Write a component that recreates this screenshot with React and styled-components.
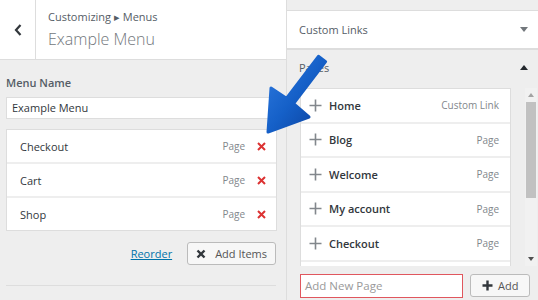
import React from "react";
import styled, { createGlobalStyle } from "styled-components";

const GlobalStyle = createGlobalStyle`
  body {
    margin: 0;
    background: #eeeeee;
    font-family: "Open Sans", "Noto Sans", sans-serif;
  }
`;

const Screen = styled.div`
  position: relative;
  display: flex;
  width: 538px;
  height: 300px;
  overflow: hidden;
  background: #eeeeee;
`;

const LeftPanel = styled.div`
  width: 286px;
  flex-shrink: 0;
  border-right: 1px solid #dddddd;
  display: flex;
  flex-direction: column;
`;

const Header = styled.div`
  height: 59px;
  background: #ffffff;
  border-bottom: 1px solid #dddddd;
  display: flex;
`;

const BackButton = styled.div`
  width: 35px;
  border-right: 1px solid #dddddd;
  display: flex;
  align-items: center;
  justify-content: center;
`;

const HeaderText = styled.div`
  padding: 9px 0 0 12px;
`;

const Crumbs = styled.div`
  font-size: 11px;
  color: #555d66;
  line-height: 16px;
`;

const Title = styled.div`
  margin-top: 3px;
  font-size: 16px;
  font-weight: 300;
  color: #72777c;
  line-height: 22px;
`;

const Body = styled.div`
  padding: 15px 10px 0 6px;
`;

const Label = styled.div`
  font-size: 11px;
  font-weight: 600;
  color: #555d66;
  line-height: 16px;
`;

const NameInput = styled.div`
  margin-top: 6px;
  height: 20px;
  background: #ffffff;
  border: 1px solid #dddddd;
  border-right: none;
  margin-right: -10px;
  padding-left: 5px;
  font-size: 11px;
  line-height: 20px;
  color: #32373c;
`;

const ItemList = styled.div`
  margin-top: 10px;
  width: 269px;
  background: #ffffff;
  border: 1px solid #dddddd;
`;

const MenuRow = styled.div`
  height: 32px;
  display: flex;
  align-items: center;
  padding: 0 10px 0 13px;
  border-top: ${(p) => (p.first ? "none" : "2px solid #eeeeee")};
  font-size: 11px;
`;

const RowTitle = styled.span`
  flex: 1;
  color: #32373c;
  font-weight: 500;
`;

const RowType = styled.span`
  color: #82878c;
  font-size: 10px;
  margin-right: ${(p) => p.gap || 0}px;
`;

const Actions = styled.div`
  margin-top: 11px;
  width: 270px;
  display: flex;
  justify-content: flex-end;
  align-items: center;
  gap: 15px;
`;

const Reorder = styled.a`
  font-size: 11px;
  color: #0073aa;
  text-decoration: underline;
`;

const Button = styled.div`
  height: 21px;
  display: flex;
  align-items: center;
  gap: ${(p) => p.gap || 6}px;
  padding: 0 ${(p) => p.pad || 10}px;
  background: #f7f7f7;
  border: 1px solid #bbbbbb;
  border-radius: 3px;
  font-size: 11px;
  color: #555555;
`;

const Divider = styled.div`
  margin-top: 20px;
  width: 270px;
  height: 1px;
  background: #dddddd;
`;

const RightPanel = styled.div`
  flex: 1;
  padding-top: 10px;
  display: flex;
  flex-direction: column;
`;

const Section = styled.div`
  box-sizing: border-box;
  height: 39px;
  display: flex;
  align-items: center;
  justify-content: space-between;
  padding: 0 10px ${(p) => (p.open ? 4 : 0)}px 12px;
  background: ${(p) => (p.open ? "#eeeeee" : "#ffffff")};
  border-top: 1px solid #dddddd;
  border-bottom: ${(p) => (p.open ? "none" : "1px solid #dddddd")};
  font-size: 11px;
  font-weight: 500;
  color: #555d66;
`;

const Triangle = styled.span`
  width: 0;
  height: 0;
  border-left: ${(p) => p.half || 4}px solid transparent;
  border-right: ${(p) => p.half || 4}px solid transparent;
  ${(p) =>
    p.up
      ? `border-bottom: ${p.tall || 5}px solid ${p.color || "#23282d"};`
      : `border-top: ${p.tall || 5}px solid ${p.color || "#72777c"};`}
`;

const PagesBody = styled.div`
  display: flex;
  height: 178px;
`;

const PageList = styled.div`
  margin-left: 13px;
  width: 211px;
  height: 178px;
  overflow: hidden;
  background: #ffffff;
  border: 1px solid #dddddd;
  border-bottom: none;
  box-sizing: border-box;
`;

const PageRow = styled.div`
  height: 32.5px;
  display: flex;
  align-items: center;
  padding: 0 11px 0 8px;
  border-bottom: 2px solid #eeeeee;
  font-size: 11px;
`;

const PageTitle = styled.span`
  flex: 1;
  margin-left: 7px;
  font-weight: 600;
  color: #32373c;
`;

const Scrollbar = styled.div`
  margin-left: 14px;
  width: 12px;
  display: flex;
  flex-direction: column;
  align-items: center;
  background: #f1f1f1;
`;

const ScrollArrow = styled.div`
  height: 14px;
  display: flex;
  align-items: center;
`;

const Thumb = styled.div`
  width: 10px;
  height: 96px;
  background: #c1c1c1;
`;

const Spacer = styled.div`
  flex: 1;
`;

const AddRow = styled.div`
  margin-top: 8px;
  padding-left: 13px;
  display: flex;
  gap: 7px;
`;

const NewPageInput = styled.div`
  width: 157px;
  height: 22px;
  border: 1px solid #e0575e;
  background: #ffffff;
  padding-left: 4px;
  font-size: 11.5px;
  line-height: 22px;
  color: #9a9a9a;
`;

const Arrow = styled.svg`
  position: absolute;
  left: 0;
  top: 0;
  pointer-events: none;
`;

const Plus = () => (
  <svg width="13" height="13" viewBox="0 0 13 13">
    <path d="M6.5 0.5v12M0.5 6.5h12" stroke="#82878c" strokeWidth="1.6" />
  </svg>
);

const RedX = () => (
  <svg width="9" height="9" viewBox="0 0 9 9">
    <path d="M1 1l7 7M8 1l-7 7" stroke="#dc3232" strokeWidth="2" />
  </svg>
);

const menuItems = ["Checkout", "Cart", "Shop"];
const pages = [
  ["Home", "Custom Link"],
  ["Blog", "Page"],
  ["Welcome", "Page"],
  ["My account", "Page"],
  ["Checkout", "Page"],
];

export default function App() {
  return (
    <Screen>
      <GlobalStyle />
      <LeftPanel>
        <Header>
          <BackButton>
            <svg width="8" height="12" viewBox="0 0 8 12">
              <path d="M6.5 1L2 6l4.5 5" fill="none" stroke="#32373c" strokeWidth="2.2" />
            </svg>
          </BackButton>
          <HeaderText>
            <Crumbs>Customizing ▸ Menus</Crumbs>
            <Title>Example Menu</Title>
          </HeaderText>
        </Header>
        <Body>
          <Label>Menu Name</Label>
          <NameInput>Example Menu</NameInput>
          <ItemList>
            {menuItems.map((item, i) => (
              <MenuRow key={item} first={i === 0}>
                <RowTitle>{item}</RowTitle>
                <RowType gap={12}>Page</RowType>
                <RedX />
              </MenuRow>
            ))}
          </ItemList>
          <Actions>
            <Reorder>Reorder</Reorder>
            <Button gap={9} pad={8}>
              <svg width="10" height="10" viewBox="0 0 10 10">
                <path d="M1.5 1.5l7 7M8.5 1.5l-7 7" stroke="#32373c" strokeWidth="2.4" />
              </svg>
              Add Items
            </Button>
          </Actions>
          <Divider />
        </Body>
      </LeftPanel>
      <RightPanel>
        <Section>
          Custom Links
          <Triangle />
        </Section>
        <Section open>
          Pages
          <Triangle up />
        </Section>
        <PagesBody>
          <PageList>
            {pages.map(([title, type]) => (
              <PageRow key={title}>
                <Plus />
                <PageTitle>{title}</PageTitle>
                <RowType>{type}</RowType>
              </PageRow>
            ))}
          </PageList>
          <Scrollbar>
            <ScrollArrow>
              <Triangle up half={3} tall={4} color="#a3a3a3" />
            </ScrollArrow>
            <Thumb />
            <Spacer />
            <ScrollArrow>
              <Triangle half={3} tall={4} color="#505050" />
            </ScrollArrow>
          </Scrollbar>
        </PagesBody>
        <AddRow>
          <NewPageInput>Add New Page</NewPageInput>
          <Button gap={5} pad={11}>
            <svg width="11" height="11" viewBox="0 0 11 11">
              <path d="M5.5 0.5v10M0.5 5.5h10" stroke="#32373c" strokeWidth="2.4" />
            </svg>
            Add
          </Button>
        </AddRow>
      </RightPanel>
      <Arrow width="538" height="300" viewBox="0 0 538 300">
        <defs>
          <linearGradient id="arrowFill" x1="0" y1="0" x2="1" y2="1">
            <stop offset="0" stopColor="#2f7be0" />
            <stop offset="0.5" stopColor="#1560c8" />
            <stop offset="1" stopColor="#0b3f9a" />
          </linearGradient>
        </defs>
        <polygon
          points="318.4,56.3 286.4,98.3 271,88 268,132 309,117 293.6,103.7 325.6,61.7"
          fill="url(#arrowFill)"
          stroke="url(#arrowFill)"
          strokeWidth="3"
          strokeLinejoin="round"
        />
      </Arrow>
    </Screen>
  );
}
